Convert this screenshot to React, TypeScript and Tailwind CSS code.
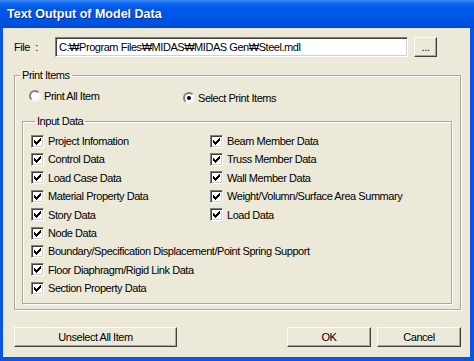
import React from "react";

const leftItems = [
  "Project Infomation",
  "Control Data",
  "Load Case Data",
  "Material Property Data",
  "Story Data",
];
const rightItems = [
  "Beam Member Data",
  "Truss Member Data",
  "Wall Member Data",
  "Weight/Volumn/Surface Area Summary",
  "Load Data",
];
const wideItems = [
  "Node Data",
  "Boundary/Specification Displacement/Point Spring Support",
  "Floor Diaphragm/Rigid Link Data",
  "Section Property Data",
];

// classic 7x7 check mark, drawn pixel by pixel
const checkPixels: [number, number][] = [
  [6, 0],
  [5, 1], [6, 1],
  [0, 2], [4, 2], [5, 2], [6, 2],
  [0, 3], [1, 3], [3, 3], [4, 3], [5, 3],
  [0, 4], [1, 4], [2, 4], [3, 4], [4, 4],
  [1, 5], [2, 5], [3, 5],
  [2, 6],
];

const CheckBox = ({ label }: { label: string }) => (
  <div className="flex items-center h-[18.4px]">
    <span className="w-[13px] h-[13px] box-border bg-white border border-t-[#808080] border-l-[#808080] border-b-white border-r-white shadow-[inset_1px_1px_0_#404040,inset_-1px_-1px_0_#d4d0c8] flex items-center justify-center shrink-0">
      <svg width="7" height="7" viewBox="0 0 7 7" shapeRendering="crispEdges">
        {checkPixels.map(([x, y]) => (
          <rect key={`${x}-${y}`} x={x} y={y} width="1" height="1" fill="#000" />
        ))}
      </svg>
    </span>
    <span className="ml-[4px] whitespace-nowrap">{label}</span>
  </div>
);

const Radio = ({ label, checked }: { label: string; checked?: boolean }) => (
  <div className="flex items-center h-[14px]">
    <span className="w-[12px] h-[12px] box-border rounded-full bg-white border-2 border-t-[#808080] border-l-[#808080] border-b-[#f4f3ee] border-r-[#f4f3ee] flex items-center justify-center shrink-0">
      {checked && <span className="w-[4px] h-[4px] rounded-full bg-black" />}
    </span>
    <span className="ml-[3px] whitespace-nowrap">{label}</span>
  </div>
);

const Button = ({ label, className }: { label: string; className?: string }) => (
  <button
    type="button"
    className={`h-[20px] box-border bg-[#ece9d8] border border-t-white border-l-white border-b-[#404040] border-r-[#404040] shadow-[inset_-1px_-1px_0_#aca899] flex items-center justify-center text-black ${className ?? ""}`}
  >
    {label}
  </button>
);

export default function App() {
  return (
    <div
      className="w-[474px] h-[361px] flex flex-col bg-[#0a56e4] text-[11px] text-black tracking-[-0.45px]"
      style={{ fontFamily: '"Liberation Sans", "DejaVu Sans", sans-serif' }}
    >
      {/* Title bar */}
      <div className="h-[28px] shrink-0 flex items-center pl-[7px] bg-[linear-gradient(to_bottom,#3d8ff5_0px,#1367f0_3px,#0059ea_8px,#0054e3_20px,#0051dd_26px,#0043c4_28px)]">
        <span className="text-white font-bold text-[12.5px] tracking-normal [text-shadow:1px_1px_0_#0a2a8a]">
          Text Output of Model Data
        </span>
      </div>

      {/* Frame */}
      <div className="flex-1 pl-[3px] pr-[4px] pb-[4px] flex">
        <div className="flex-1 bg-[#ece9d8] flex flex-col pl-[11px] pr-[9px] pt-[9px]">
          {/* File row */}
          <div className="flex items-center h-[20px]">
            <span className="w-[41px]">File&nbsp;&nbsp;:</span>
            <div className="w-[353px] h-[20px] box-border bg-white border border-t-[#808080] border-l-[#808080] border-b-white border-r-white shadow-[inset_1px_1px_0_#404040,inset_-1px_-1px_0_#d4d0c8] flex items-center pl-[3px] whitespace-nowrap overflow-hidden">
              C:₩Program Files₩MIDAS₩MIDAS Gen₩Steel.mdl
            </div>
            <Button label="..." className="ml-[6px] w-[23px]" />
          </div>

          {/* Print Items */}
          <fieldset className="mt-[12px] w-[447px] border border-[#aca899] shadow-[inset_1px_1px_0_#fff,1px_1px_0_#fff] flex flex-col">
            <legend className="ml-[5px] px-[2px] leading-[12px]">Print Items</legend>
            <div className="flex mt-[8px] pl-[14px]">
              <div className="w-[154px]">
                <Radio label="Print All Item" />
              </div>
              <div className="mt-[2px]">
                <Radio label="Select Print Items" checked />
              </div>
            </div>

            {/* Input Data */}
            <fieldset className="mt-[10px] ml-[7px] mb-[5px] w-[430px] border border-[#aca899] shadow-[inset_1px_1px_0_#fff,1px_1px_0_#fff] pl-[8px] pt-[5px] pb-[5.5px]">
              <legend className="ml-[4px] px-[2px] leading-[12px]">Input Data</legend>
              <div className="flex">
                <div className="w-[179px] flex flex-col">
                  {leftItems.map((l) => (
                    <CheckBox key={l} label={l} />
                  ))}
                </div>
                <div className="flex flex-col">
                  {rightItems.map((l) => (
                    <CheckBox key={l} label={l} />
                  ))}
                </div>
              </div>
              {wideItems.map((l) => (
                <CheckBox key={l} label={l} />
              ))}
            </fieldset>
          </fieldset>

          {/* Buttons */}
          <div className="flex mt-[17px] w-[447px]">
            <Button label="Unselect All Item" className="w-[163px]" />
            <div className="flex-1" />
            <Button label="OK" className="w-[84px]" />
            <Button label="Cancel" className="w-[84px] ml-[6px]" />
          </div>
        </div>
      </div>
    </div>
  );
}
